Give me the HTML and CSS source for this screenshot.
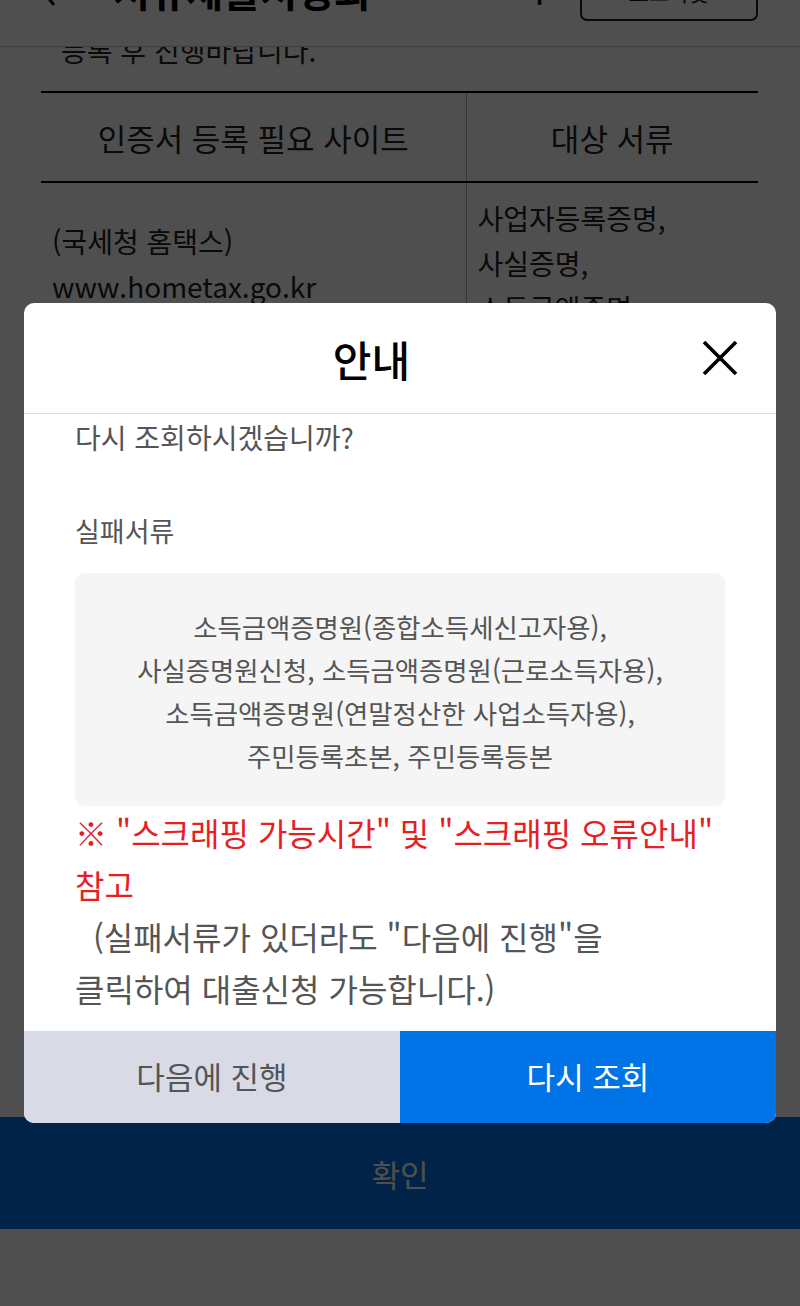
FILE: index.html
```html
<!DOCTYPE html>
<html lang="ko">
<head>
<meta charset="utf-8">
<title>서류제출</title>
<link rel="stylesheet" href="styles.css">
</head>
<body>
<div class="page">
  <header class="topbar">
    <div class="topbar-inner">
      <svg class="back" width="20" height="34" viewBox="0 0 20 34"><path d="M16 2 L4 17 L16 32" fill="none" stroke="#111" stroke-width="3"/></svg>
      <h1 class="page-title">서류제출서명회</h1>
      <span class="help">저</span>
      <button class="top-btn">로그아웃</button>
    </div>
  </header>

  <main class="content">
    <p class="notice">등록 후 진행바랍니다.</p>
    <table class="cert-table">
      <thead>
        <tr><th class="col-site">인증서 등록 필요 사이트</th><th class="col-doc">대상 서류</th></tr>
      </thead>
      <tbody>
        <tr>
          <td class="col-site">(국세청 홈택스)<br>www.hometax.go.kr</td>
          <td class="col-doc">사업자등록증명,<br>사실증명,<br>소득금액증명</td>
        </tr>
      </tbody>
    </table>
  </main>

  <footer class="bottom">
    <button class="confirm">확인</button>
    <div class="bottom-space"></div>
  </footer>

  <div class="dim">
    <div class="modal">
      <div class="modal-head">
        <h2 class="modal-title">안내</h2>
        <button class="close" aria-label="닫기">
          <svg width="36" height="36" viewBox="0 0 36 36"><path d="M2 2 L34 34 M34 2 L2 34" stroke="#000" stroke-width="3.6" fill="none"/></svg>
        </button>
      </div>
      <div class="modal-body">
        <p class="question">다시 조회하시겠습니까?</p>
        <p class="label">실패서류</p>
        <div class="fail-box">
          소득금액증명원(종합소득세신고자용),<br>
          사실증명원신청, 소득금액증명원(근로소득자용),<br>
          소득금액증명원(연말정산한 사업소득자용),<br>
          주민등록초본, 주민등록등본
        </div>
        <p class="warn">※ "스크래핑 가능시간" 및 "스크래핑 오류안내" 참고</p>
        <p class="desc">&nbsp;&nbsp;(실패서류가 있더라도 "다음에 진행"을 클릭하여 대출신청 가능합니다.)</p>
      </div>
      <div class="modal-actions">
        <button class="btn-later">다음에 진행</button>
        <button class="btn-retry">다시 조회</button>
      </div>
    </div>
  </div>
</div>
</body>
</html>
```

FILE: styles.css
```css
* { box-sizing: border-box; }
html, body { margin: 0; padding: 0; }
body {
  font-family: "Noto Sans CJK KR", "Noto Sans", sans-serif;
  background: #fff;
  color: #222;
}
.page {
  position: relative;
  width: 800px;
  height: 1306px;
  overflow: hidden;
  display: flex;
  flex-direction: column;
  background: #fff;
}
.topbar {
  position: absolute;
  top: 0; left: 0; right: 0;
  height: 47px;
  background: #fff;
  border-bottom: 1px solid #c8c8c8;
  z-index: 2;
  overflow: hidden;
}
.topbar-inner {
  display: flex;
  align-items: center;
  height: 60px;
  margin-top: -40px;
  padding: 0 42px 0 38px;
}
.back { margin-right: 55px; }
.page-title {
  margin: 0;
  font-size: 40px;
  font-weight: 700;
  color: #000;
  flex: 1;
}
.help {
  font-size: 26px;
  font-weight: 700;
  color: #000;
  margin-right: 36px;
}
.top-btn {
  width: 178px;
  height: 60px;
  border: 2px solid #222;
  border-radius: 7px;
  background: #fff;
  font-family: inherit;
  font-size: 22px;
  color: #111;
  margin-top: 2px;
}
.content {
  flex: 1;
  padding: 32px 42px 0 41px;
}
.notice {
  margin: 0 0 0 20px;
  font-size: 28px;
  line-height: 36px;
  color: #222;
}
.cert-table {
  margin-top: 23px;
  width: 717px;
  border-collapse: collapse;
  font-size: 28px;
  color: #222;
}
.cert-table th {
  font-size: 31px;
  font-weight: 400;
  height: 90px;
  border-top: 2px solid #000;
  border-bottom: 2px solid #000;
  text-align: center;
}
.cert-table td {
  padding: 13px 10px 13px 11px;
  line-height: 45px;
  vertical-align: middle;
}
.cert-table .col-site { width: 425px; border-right: 1px solid #aaa; }

.bottom { display: flex; flex-direction: column; }
.confirm {
  height: 112px;
  border: 0;
  background: #0073e6;
  color: #fff;
  font-family: inherit;
  font-size: 31px;
}
.bottom-space { height: 77px; background: #fff; }

.dim {
  position: absolute;
  inset: 0;
  z-index: 5;
  background: rgba(0, 0, 0, 0.69);
  padding: 303px 24px 0;
}
.modal {
  width: 752px;
  background: #fff;
  border-radius: 10px;
  overflow: hidden;
}
.modal-head {
  height: 111px;
  display: flex;
  align-items: center;
  padding: 0 38px 0 17px;
  border-bottom: 1px solid #dcdcdc;
}
.modal-title {
  flex: 1;
  margin: 0;
  text-align: center;
  font-size: 42px;
  font-weight: 500;
  color: #000;
}
.close {
  width: 36px;
  height: 36px;
  padding: 0;
  border: 0;
  background: none;
  display: block;
}
.close svg { display: block; }
.modal-body {
  padding: 4px 51px 17px;
  color: #555;
  word-break: keep-all;
}
.question {
  margin: 0;
  font-size: 28px;
  line-height: 38px;
}
.label {
  margin: 56px 0 0;
  font-size: 27px;
  line-height: 38px;
}
.fail-box {
  margin-top: 23px;
  background: #f5f5f5;
  border-radius: 9px;
  padding: 32px 0 29px;
  text-align: center;
  font-size: 26.4px;
  line-height: 43px;
  color: #555;
}
.warn {
  margin: 0;
  color: #e5201f;
  font-size: 32px;
  line-height: 52px;
}
.desc {
  margin: 0;
  font-size: 32px;
  line-height: 52px;
  color: #555;
}
.modal-actions {
  display: flex;
  height: 92px;
}
.modal-actions button {
  flex: 1;
  border: 0;
  font-family: inherit;
  font-size: 31px;
  padding-bottom: 4px;
}
.btn-later { background: #d8dbe6; color: #555; }
.btn-retry { background: #0073e6; color: #fff; }
```
